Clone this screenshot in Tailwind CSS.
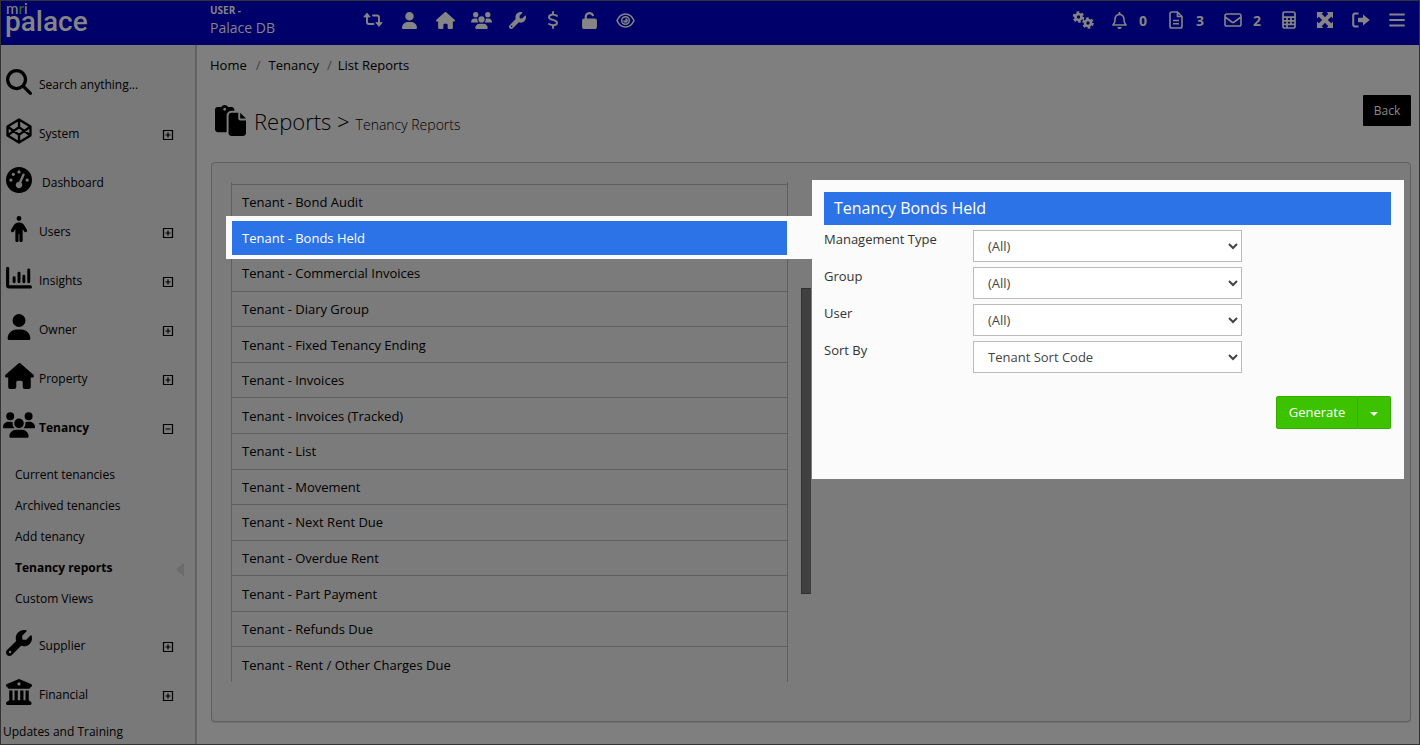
<!DOCTYPE html>
<html lang="en">
<head>
<meta charset="utf-8">
<title>Palace - Tenancy Reports</title>
<meta name="viewport" content="width=device-width, initial-scale=1">
<script src="https://cdn.jsdelivr.net/npm/@tailwindcss/browser@4"></script>
</head>
<body class="bg-[#7f7f7f] font-['Open_Sans',sans-serif] text-[13px] leading-5 text-black">
<svg class="hidden" aria-hidden="true">
  <symbol id="search" viewBox="0 0 512 512"><path d="M416 208c0 45.9-14.9 88.3-40 122.7L502.6 457.4c12.5 12.5 12.5 32.8 0 45.3s-32.8 12.5-45.3 0L330.7 376c-34.4 25.2-76.8 40-122.7 40C93.1 416 0 322.9 0 208S93.1 0 208 0S416 93.1 416 208zM208 352a144 144 0 1 0 0-288 144 144 0 1 0 0 288z"/></symbol>
  <symbol id="codepen" viewBox="0 0 512 512"><path d="M256 28 482 168V344L256 484 30 344V168ZM256 28V180M256 332V484M30 168 256 332 482 168M30 344 256 180 482 344" fill="none" stroke="currentColor" stroke-width="46" stroke-linejoin="round"/></symbol>
  <symbol id="gauge" viewBox="0 0 512 512"><path fill-rule="evenodd" d="M0 256a256 256 0 1 1 512 0A256 256 0 1 1 0 256zM288 96a32 32 0 1 0-64 0 32 32 0 1 0 64 0zM256 416c35.300 0 64-28.700 64-64 0-17.400-6.900-33.100-18.100-44.600L366 161.700c5.300-12.100-.2-26.300-12.300-31.600s-26.300 .2-31.600 12.300L257.900 288c-.6 0-1.300 0-1.900 0-35.300 0-64 28.700-64 64s28.700 64 64 64zM176 144a32 32 0 1 0-64 0 32 32 0 1 0 64 0zM96 288a32 32 0 1 0 0-64 32 32 0 1 0 0 64zm352-32a32 32 0 1 0-64 0 32 32 0 1 0 64 0z"/></symbol>
  <symbol id="person" viewBox="0 0 320 512"><path d="M112 48a48 48 0 1 1 96 0 48 48 0 1 1-96 0zm40 304V480c0 17.700-14.300 32-32 32s-32-14.300-32-32V256.900L59.400 304.500c-9.100 15.100-28.800 20-43.900 10.900s-20-28.800-10.900-43.900l58.300-97c17.400-28.900 48.600-46.600 82.300-46.600h29.700c33.700 0 64.900 17.700 82.300 46.600l58.300 97c9.100 15.100 4.200 34.800-10.900 43.900s-34.800 4.200-43.900-10.900L232 256.900V480c0 17.700-14.300 32-32 32s-32-14.300-32-32V352H152z"/></symbol>
  <symbol id="chart" viewBox="0 0 512 512"><path d="M32 64V400q0 32 32 32H480" fill="none" stroke="currentColor" stroke-width="62" stroke-linecap="round"/><path d="M160 250V330M256 160V330M352 220V330M448 96V330" fill="none" stroke="currentColor" stroke-width="58" stroke-linecap="round"/></symbol>
  <symbol id="user" viewBox="0 0 448 512"><path d="M224 256A128 128 0 1 0 224 0a128 128 0 1 0 0 256zm-45.700 48C79.800 304 0 383.800 0 482.300C0 498.700 13.300 512 29.700 512H418.300c16.400 0 29.700-13.300 29.700-29.700C448 383.800 368.200 304 269.700 304H178.300z"/></symbol>
  <symbol id="house" viewBox="0 0 576 512"><path d="M575.8 255.5c0 18-15 32.1-32 32.1h-32l.7 160.200c0 2.700-.2 5.400-.5 8.100V472c0 22.100-17.900 40-40 40H392c-22.100 0-40-17.900-40-40V384c0-17.700-14.300-32-32-32H256c-17.700 0-32 14.300-32 32v88c0 22.100-17.900 40-40 40H104c-22.100 0-40-17.900-40-40V287.600H32c-18 0-32-14-32-32.100c0-9 3-17 10-24L266.400 8c7-7 15-8 22-8s15 2 21 7L564.800 231.500c8 7 12 15 11 24z"/></symbol>
  <symbol id="group" viewBox="0 0 640 512"><path d="M144 0a80 80 0 1 1 0 160A80 80 0 1 1 144 0zM512 0a80 80 0 1 1 0 160A80 80 0 1 1 512 0zM0 298.700C0 239.800 47.800 192 106.700 192h42.700c15.900 0 31 3.500 44.600 9.700-1.300 7.200-1.900 14.700-1.900 22.300 0 38.200 16.800 72.500 43.300 96H21.300C9.600 320 0 310.400 0 298.700zM405.300 320c26.600-23.500 43.300-57.800 43.300-96 0-7.600-.7-15-1.900-22.300 13.600-6.300 28.700-9.700 44.600-9.700h42.700C592.200 192 640 239.800 640 298.700c0 11.800-9.600 21.300-21.300 21.300H405.300zM224 224a96 96 0 1 1 192 0 96 96 0 1 1-192 0zM128 485.300C128 411.700 187.700 352 261.300 352H378.700C452.300 352 512 411.700 512 485.300c0 14.700-11.900 26.700-26.700 26.700H154.700c-14.700 0-26.700-11.900-26.700-26.700z"/></symbol>
  <symbol id="wrench" viewBox="0 0 512 512"><path d="M352 320c88.400 0 160-71.600 160-160c0-15.300-2.200-30.100-6.200-44.200c-3.100-10.800-16.400-13.200-24.300-5.300l-76.800 76.800c-3 3-7.100 4.700-11.300 4.700H336c-8.800 0-16-7.200-16-16V118.600c0-4.200 1.700-8.300 4.700-11.300l76.800-76.800c7.900-7.900 5.400-21.200-5.300-24.300C382.100 2.200 367.300 0 352 0C263.600 0 192 71.600 192 160c0 19.100 3.400 37.500 9.500 54.500L19.900 396.100C7.200 408.800 0 426.100 0 444.100C0 481.600 30.400 512 67.900 512c18 0 35.300-7.200 48-19.900L297.500 310.500c17 6.200 35.400 9.500 54.500 9.500zM80 408a24 24 0 1 1 0 48 24 24 0 1 1 0-48z"/></symbol>
  <symbol id="bank" viewBox="0 0 512 512"><path fill-rule="evenodd" d="M243.400 2.600l-224 96c-14 6-21.800 21-18.700 35.800S16.800 160 32 160v8c0 13.300 10.700 24 24 24H456c13.300 0 24-10.700 24-24v-8c15.200 0 28.300-10.700 31.300-25.600s-4.800-29.900-18.700-35.800l-224-96c-8-3.400-17.200-3.400-25.200 0zM256 64a32 32 0 1 1 0 64 32 32 0 1 1 0-64zM64 224h64V420h40V224h64V420h48V224h64V420h40V224h64V420l46 34c8 6 10 16 8 26-4 20-16 32-32 32H32c-14 0-28-10-32-24s0-27 12-35l52-33Z"/></symbol>
  <symbol id="paste" viewBox="0 0 512 512"><path fill-rule="evenodd" d="M160 0c-23.700 0-44.400 12.900-55.400 32H48C21.500 32 0 53.500 0 80V400c0 26.500 21.500 48 48 48H192V176c0-44.200 35.800-80 80-80h48V80c0-26.500-21.500-48-48-48H215.400C204.400 12.900 183.700 0 160 0zm0 48a24 24 0 1 1 0 48 24 24 0 1 1 0-48z"/><path d="M272 128H384V224c0 17.700 14.300 32 32 32h96V464c0 26.500-21.500 48-48 48H272c-26.500 0-48-21.500-48-48V176c0-26.500 21.500-48 48-48zM416 128 512 224H416Z"/></symbol>
  <symbol id="plus" viewBox="0 0 12 12"><path d="M1.500 1.500H10.500V10.500H1.500ZM3.500 6H8.500M6 3.500V8.500" fill="none" stroke="currentColor" stroke-width="1.200"/></symbol>
  <symbol id="minus" viewBox="0 0 12 12"><path d="M1.500 1.500H10.500V10.500H1.500ZM3.500 6H8.500" fill="none" stroke="currentColor" stroke-width="1.200"/></symbol>
  <symbol id="retweet" viewBox="0 0 20 16"><path d="M4 3.500V10q0 2 2 2H10.500M10 3.500H14q2 0 2 2V12" fill="none" stroke="currentColor" stroke-width="1.900" stroke-linecap="round"/><path d="M4 1 .8 5H7.200ZM16 14.500 12.800 10.500H19.200Z" stroke="currentColor" stroke-linejoin="round" stroke-width=".8"/></symbol>
  <symbol id="dollar" viewBox="0 0 12 18"><path d="M6 1V3.500M6 14.500V17M10 4.800C6.500 3 2 3.200 2 6.200 2 9.700 10 8.200 10 11.800 10 15 5 14.800 2 13" fill="none" stroke="currentColor" stroke-width="1.900" stroke-linecap="round"/></symbol>
  <symbol id="lock" viewBox="0 0 448 512"><path d="M144 144c0-44.200 35.800-80 80-80 31.900 0 59.400 18.600 72.300 45.700 7.600 16 26.700 22.800 42.600 15.200s22.800-26.700 15.200-42.600C331 33.700 281.500 0 224 0 144.500 0 80 64.500 80 144v48H64c-35.300 0-64 28.700-64 64V448c0 35.300 28.700 64 64 64H384c35.300 0 64-28.700 64-64V256c0-35.300-28.700-64-64-64H144V144z"/></symbol>
  <symbol id="eye" viewBox="0 0 20 18"><path d="M1 9C5-.3 15-.3 19 9 15 18.300 5 18.300 1 9Z" fill="none" stroke="currentColor" stroke-width="1.600"/><circle cx="10" cy="9" r="4" fill="none" stroke="currentColor" stroke-width="1.600"/><path d="M10 6.500V9H7.500A2.500 2.500 0 1 0 10 6.500"/></symbol>
  <symbol id="cogs" viewBox="0 0 22 18"><g fill="none" stroke="currentColor"><circle cx="6.500" cy="6" r="3" stroke-width="2.600"/><circle cx="6.500" cy="6" r="4.700" stroke-width="2.200" stroke-dasharray="2.600 2.320"/><circle cx="16" cy="12" r="3" stroke-width="2.600"/><circle cx="16" cy="12" r="4.700" stroke-width="2.200" stroke-dasharray="2.600 2.320"/></g></symbol>
  <symbol id="bell" viewBox="0 0 448 512"><path d="M224 0c-17.700 0-32 14.300-32 32V51.200C119 66 64 130.600 64 208v25.400c0 45.400-15.500 89.500-43.800 124.900L5.300 377c-5.800 7.200-6.900 17.100-2.900 25.400S14.800 416 24 416H424c9.200 0 17.600-5.300 21.600-13.600s2.900-18.200-2.900-25.400l-14.900-18.600C399.500 322.900 384 278.800 384 233.400V208c0-77.400-55-142-128-156.800V32c0-17.700-14.300-32-32-32zm0 96c61.900 0 112 50.100 112 112v25.400c0 47.900 13.900 94.600 39.700 134.600H72.300C98.100 328 112 281.300 112 233.400V208c0-61.900 50.100-112 112-112zm64 352H160c0 17 6.700 33.300 18.700 45.300S207 512 224 512s33.300-6.700 45.300-18.700S288 465 288 448z"/></symbol>
  <symbol id="doc" viewBox="0 0 14 18"><path d="M2.800 1H8.500L13 5.500V15.200Q13 17 11.200 17H2.800Q1 17 1 15.200V2.800Q1 1 2.800 1ZM8.500 1V5.500H13M4 9.500H10M4 12.800H10" fill="none" stroke="currentColor" stroke-width="1.600"/></symbol>
  <symbol id="mail" viewBox="0 0 18 14"><path d="M2.800 1H15.200Q17 1 17 2.800V11.200Q17 13 15.200 13H2.800Q1 13 1 11.200V2.800Q1 1 2.800 1ZM1 4 7.800 9Q9 9.800 10.200 9L17 4" fill="none" stroke="currentColor" stroke-width="1.600"/></symbol>
  <symbol id="calc" viewBox="0 0 14 18"><path d="M2.800 1H11.200Q13 1 13 2.800V15.200Q13 17 11.200 17H2.800Q1 17 1 15.200V2.800Q1 1 2.800 1ZM1 6.200H13M1 9.800H13M1 13.300H13M5 6.200V17M9 6.200V13.500" fill="none" stroke="currentColor" stroke-width="1.700"/></symbol>
  <symbol id="expand" viewBox="0 0 16 16"><path d="M0 0H6.500L4.700 1.800 8 5.200 11.300 1.800 9.500 0H16V6.500L14.200 4.700 10.800 8 14.200 11.300 16 9.500V16H9.500L11.300 14.200 8 10.800 4.700 14.200 6.500 16H0V9.500L1.800 11.300 5.200 8 1.800 4.700 0 6.500Z"/></symbol>
  <symbol id="signout" viewBox="0 0 18 16"><path d="M6.500 1.500H3.500Q1.200 1.500 1.200 3.800V12.200Q1.200 14.500 3.500 14.500H6.500" fill="none" stroke="currentColor" stroke-width="2"/><path d="M6.800 5.800H11V2.500L17.800 8 11 13.500V10.200H6.800Q6 10.200 6 9.400V6.600Q6 5.800 6.800 5.800Z"/></symbol>
  <symbol id="bars" viewBox="0 0 16 14"><path d="M1 1.500H15M1 7H15M1 12.500H15" fill="none" stroke="currentColor" stroke-width="1.800" stroke-linecap="round"/></symbol>
</svg>

<div class="flex min-h-screen flex-col border border-[#333333]">
  <header class="flex h-[44px] items-start bg-[#00006b] text-[#858585]">
    <a href="#" class="flex w-[209px] shrink-0 flex-col pl-1" aria-label="MRI Palace">
      <span class="pl-px font-['Lato',sans-serif] text-[15px] leading-[14px] font-medium">m<span class="text-[#3c6a10]">r</span>i</span>
      <span class="font-['Roboto',sans-serif] text-[28px] leading-[14px] font-medium">palace</span>
    </a>
    <div class="w-[145px] shrink-0 pt-[3px]">
      <div class="text-[10px] leading-3 font-bold">USER -</div>
      <div class="pt-px text-[14px] leading-[22px]">Palace DB</div>
    </div>
    <nav class="flex h-[38px] flex-1 items-center" aria-label="Shortcuts">
      <button class="flex w-9 justify-center" aria-label="Refresh"><svg class="h-4 w-5 fill-current"><use href="#retweet"/></svg></button>
      <button class="flex w-9 justify-center" aria-label="User"><svg class="h-[17px] w-[15px] fill-current"><use href="#user"/></svg></button>
      <button class="flex w-9 justify-center" aria-label="Property"><svg class="h-[17px] w-[19px] fill-current"><use href="#house"/></svg></button>
      <button class="flex w-9 justify-center" aria-label="Tenancy"><svg class="h-[17px] w-[21px] fill-current"><use href="#group"/></svg></button>
      <button class="flex w-9 justify-center" aria-label="Supplier"><svg class="h-[17px] w-[17px] fill-current"><use href="#wrench"/></svg></button>
      <button class="flex w-9 justify-center" aria-label="Financial"><svg class="h-[18px] w-3 fill-none"><use href="#dollar"/></svg></button>
      <button class="flex w-9 justify-center" aria-label="Unlock"><svg class="h-[17px] w-[15px] fill-current"><use href="#lock"/></svg></button>
      <button class="flex w-9 justify-center" aria-label="View"><svg class="h-[17px] w-[19px] fill-current"><use href="#eye"/></svg></button>
    </nav>
    <nav class="flex h-[38px] items-center pr-1 text-[14px] font-bold" aria-label="Tools">
      <button class="flex w-9 justify-center" aria-label="Settings"><svg class="h-[18px] w-[22px]"><use href="#cogs"/></svg></button>
      <button class="flex items-center" aria-label="Alerts"><span class="flex w-9 justify-center"><svg class="h-[17px] w-[15px] fill-current"><use href="#bell"/></svg></span><span class="w-[21px] pt-0.5 pl-0.5 text-left">0</span></button>
      <button class="flex items-center" aria-label="Documents"><span class="flex w-9 justify-center"><svg class="h-[18px] w-[14px]"><use href="#doc"/></svg></span><span class="w-[21px] pt-0.5 pl-0.5 text-left">3</span></button>
      <button class="flex items-center" aria-label="Messages"><span class="flex w-9 justify-center"><svg class="h-[14px] w-[18px]"><use href="#mail"/></svg></span><span class="w-[20px] pt-0.5 pl-0.5 text-left">2</span></button>
      <button class="flex w-9 justify-center" aria-label="Calculator"><svg class="h-[18px] w-[14px]"><use href="#calc"/></svg></button>
      <button class="flex w-9 justify-center" aria-label="Full screen"><svg class="h-4 w-4 fill-current"><use href="#expand"/></svg></button>
      <button class="flex w-9 justify-center" aria-label="Sign out"><svg class="h-4 w-[18px] fill-current"><use href="#signout"/></svg></button>
      <button class="flex w-9 justify-center" aria-label="Menu"><svg class="h-[14px] w-4"><use href="#bars"/></svg></button>
    </nav>
  </header>

  <div class="flex flex-1">
    <aside class="w-[196px] shrink-0 border-r-2 border-[#626262] bg-[#797979] pt-3 text-[12px]">
      <nav aria-label="Main">
        <a href="#" class="flex h-[49px] items-center"><span class="flex w-[38px] justify-center pr-0.5"><svg class="size-[26px]"><use href="#search"/></svg></span><span class="pt-1.5">Search anything...</span></a>
        <a href="#" class="flex h-[49px] items-center"><span class="flex w-[38px] justify-center pr-0.5"><svg class="size-[26px]"><use href="#codepen"/></svg></span><span class="flex-1 pt-1.5">System</span><svg class="mt-2 mr-[21px] size-3"><use href="#plus"/></svg></a>
        <a href="#" class="flex h-[49px] items-center"><span class="flex w-[38px] justify-center pr-0.5"><svg class="size-[26px]"><use href="#gauge"/></svg></span><span class="flex-1 pt-1.5 pl-[3px]">Dashboard</span></a>
        <a href="#" class="flex h-[49px] items-center"><span class="flex w-[38px] justify-center pr-0.5"><svg class="size-[26px]"><use href="#person"/></svg></span><span class="flex-1 pt-1.5">Users</span><svg class="mt-2 mr-[21px] size-3"><use href="#plus"/></svg></a>
        <a href="#" class="flex h-[49px] items-center"><span class="flex w-[38px] justify-center pr-0.5"><svg class="size-[26px]"><use href="#chart"/></svg></span><span class="flex-1 pt-1.5">Insights</span><svg class="mt-2 mr-[21px] size-3"><use href="#plus"/></svg></a>
        <a href="#" class="flex h-[49px] items-center"><span class="flex w-[38px] justify-center pr-0.5"><svg class="size-[26px]"><use href="#user"/></svg></span><span class="flex-1 pt-1.5">Owner</span><svg class="mt-2 mr-[21px] size-3"><use href="#plus"/></svg></a>
        <a href="#" class="flex h-[49px] items-center"><span class="flex w-[38px] justify-center pr-0.5"><svg class="h-[26px] w-[29px]"><use href="#house"/></svg></span><span class="flex-1 pt-1.5">Property</span><svg class="mt-2 mr-[21px] size-3"><use href="#plus"/></svg></a>
        <a href="#" class="flex h-[49px] items-center"><span class="flex w-[38px] justify-center pr-0.5"><svg class="h-[26px] w-8"><use href="#group"/></svg></span><span class="flex-1 pt-1.5 font-bold">Tenancy</span><svg class="mt-2 mr-[21px] size-3"><use href="#minus"/></svg></a>
        <div class="flex flex-col pt-[10px] pb-1 pl-[14px] leading-[31px]">
          <a href="#">Current tenancies</a>
          <a href="#">Archived tenancies</a>
          <a href="#">Add tenancy</a>
          <a href="#" class="flex items-center justify-between pr-[11px] font-bold">Tenancy reports<span class="mt-1 h-[14px] w-2 bg-[#6c6c6c] [clip-path:polygon(100%_0,100%_100%,0_50%)]"></span></a>
          <a href="#">Custom Views</a>
        </div>
        <a href="#" class="flex h-[49px] items-center"><span class="flex w-[38px] justify-center pr-0.5"><svg class="size-[26px]"><use href="#wrench"/></svg></span><span class="flex-1 pt-1.5">Supplier</span><svg class="mt-2 mr-[21px] size-3"><use href="#plus"/></svg></a>
        <a href="#" class="flex h-[49px] items-center"><span class="flex w-[38px] justify-center pr-0.5"><svg class="size-[26px]"><use href="#bank"/></svg></span><span class="flex-1 pt-1.5">Financial</span><svg class="mt-2 mr-[21px] size-3"><use href="#plus"/></svg></a>
        <a href="#" class="block pt-1.5 pl-0.5">Updates and Training</a>
      </nav>
    </aside>

    <main class="min-w-0 flex-1 pr-2 pb-[22px] pl-[14px]">
      <nav class="-ml-px flex pt-[10px]" aria-label="Breadcrumb">
        <a href="#">Home</a><span class="pr-2 pl-[9px] text-[#3f3f3f]">/</span><a href="#">Tenancy</a><span class="pr-[6px] pl-2 text-[#3f3f3f]">/</span><a href="#">List Reports</a>
      </nav>
      <div class="flex h-[87px] items-center justify-between pt-1">
        <h1 class="flex items-center pl-1 font-light">
          <svg class="mr-2 size-[31px]"><use href="#paste"/></svg>
          <span class="flex items-baseline"><span class="text-[22px] leading-8">Reports &gt;</span><span class="pl-1.5 text-[14px]">Tenancy Reports</span></span>
        </h1>
        <button class="mb-5 h-[31px] w-12 rounded-[1px] bg-black text-[12px] text-[#8a8a8a]">Back</button>
      </div>

      <section class="flex items-start rounded-sm border border-[#5f5f5f] bg-[#7b7b7b] pt-[17px] pr-1.5 pb-[39px] pl-[19px] shadow-[0_1px_0_#707070]">
        <ul class="mt-0.5 grid h-[500px] min-w-0 flex-[555] auto-rows-fr border-x border-[#5f5f5f] pt-0.5">
          <li class="border-t border-[#5f5f5f]"><a href="#" class="flex h-full items-center pl-[10px]">Tenant - Bond Audit</a></li>
          <li class="relative isolate z-10 border-t border-[#dddddd] text-white">
            <span class="absolute -top-[5px] -right-[25px] -bottom-[4px] -left-1.5 -z-10 bg-[#fbfbfb]"></span>
            <a href="#" class="flex h-full items-center bg-[#2d73e8] pl-[10px]">Tenant - Bonds Held</a>
          </li>
          <li class="border-t border-[#5f5f5f]"><a href="#" class="flex h-full items-center pl-[10px]">Tenant - Commercial Invoices</a></li>
          <li class="border-t border-[#5f5f5f]"><a href="#" class="flex h-full items-center pl-[10px]">Tenant - Diary Group</a></li>
          <li class="border-t border-[#5f5f5f]"><a href="#" class="flex h-full items-center pl-[10px]">Tenant - Fixed Tenancy Ending</a></li>
          <li class="border-t border-[#5f5f5f]"><a href="#" class="flex h-full items-center pl-[10px]">Tenant - Invoices</a></li>
          <li class="border-t border-[#5f5f5f]"><a href="#" class="flex h-full items-center pl-[10px]">Tenant - Invoices (Tracked)</a></li>
          <li class="border-t border-[#5f5f5f]"><a href="#" class="flex h-full items-center pl-[10px]">Tenant - List</a></li>
          <li class="border-t border-[#5f5f5f]"><a href="#" class="flex h-full items-center pl-[10px]">Tenant - Movement</a></li>
          <li class="border-t border-[#5f5f5f]"><a href="#" class="flex h-full items-center pl-[10px]">Tenant - Next Rent Due</a></li>
          <li class="border-t border-[#5f5f5f]"><a href="#" class="flex h-full items-center pl-[10px]">Tenant - Overdue Rent</a></li>
          <li class="border-t border-[#5f5f5f]"><a href="#" class="flex h-full items-center pl-[10px]">Tenant - Part Payment</a></li>
          <li class="border-t border-[#5f5f5f]"><a href="#" class="flex h-full items-center pl-[10px]">Tenant - Refunds Due</a></li>
          <li class="border-t border-[#5f5f5f]"><a href="#" class="flex h-full items-center pl-[10px]">Tenant - Rent / Other Charges Due</a></li>
        </ul>
        <div class="mt-[108px] mr-px ml-[13px] h-[306px] w-[10px] shrink-0 border border-r-0 border-[#303030] bg-[#404040]"></div>
        <div class="min-w-0 flex-[592]">
          <form class="bg-[#fbfbfb] pt-3 pr-[13px] pb-[50px] pl-3 text-[#333333]">
            <h2 class="h-[33px] bg-[#2d73e8] pl-[10px] text-[16px] leading-8 text-white">Tenancy Bonds Held</h2>
            <div class="grid grid-cols-[149px_269px] gap-y-[5px] pt-[5px]">
              <label for="mtype" class="leading-[18px]">Management Type</label>
              <select id="mtype" class="h-8 border border-[#bbbbbb] bg-white pl-[10px] text-[#444444]"><option>(All)</option></select>
              <label for="grp" class="leading-[18px]">Group</label>
              <select id="grp" class="h-8 border border-[#bbbbbb] bg-white pl-[10px] text-[#444444]"><option>(All)</option></select>
              <label for="usr" class="leading-[18px]">User</label>
              <select id="usr" class="h-8 border border-[#bbbbbb] bg-white pl-[10px] text-[#444444]"><option>(All)</option></select>
              <label for="sort" class="leading-[18px]">Sort By</label>
              <select id="sort" class="h-8 border border-[#bbbbbb] bg-white pl-[10px] text-[#444444]"><option>Tenant Sort Code</option></select>
            </div>
            <div class="mt-[23px] flex justify-end text-white">
              <button type="button" class="h-[33px] w-[82px] rounded-l-xs border border-[#36ae00] bg-[#3dc200] pb-0.5">Generate</button>
              <button type="button" class="flex h-[33px] w-[33px] items-center justify-center rounded-r-xs border border-l-0 border-[#36ae00] bg-[#3dc200]" aria-label="More options"><svg class="mt-0.5 h-1 w-2 fill-current" viewBox="0 0 8 4"><path d="M0 0H8L4 4Z"/></svg></button>
            </div>
          </form>
        </div>
      </section>
    </main>
  </div>
</div>
</body>
</html>
